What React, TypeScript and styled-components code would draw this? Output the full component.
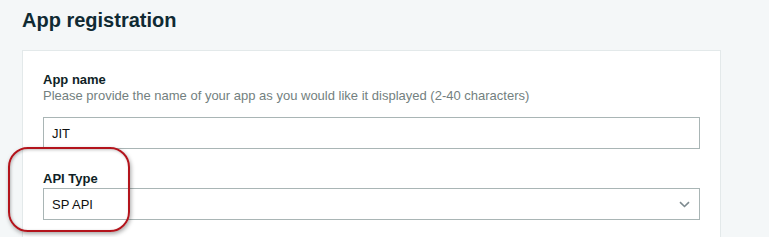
import React from "react";
import styled, { createGlobalStyle } from "styled-components";

const Global = createGlobalStyle`
  html, body { margin: 0; padding: 0; background: #f4f7f8; }
  body { font-family: Arial, "Liberation Sans", sans-serif; overflow: hidden; }
`;

const Page = styled.div`
  width: 769px;
  height: 237px;
  padding: 0 48px 0 22px;
  box-sizing: border-box;
  background: #f4f7f8;
  overflow: hidden;
`;

const Title = styled.h1`
  margin: 0;
  padding-top: 9px;
  height: 50px;
  box-sizing: border-box;
  font-size: 20px;
  line-height: 23px;
  font-weight: 700;
  color: #0f2a33;
`;

const Card = styled.div`
  background: #ffffff;
  border: 1px solid #e3e9ea;
  width: 699px;
  box-sizing: border-box;
  padding: 21px 20px 40px 20px;
  display: flex;
  flex-direction: column;
  gap: 22px;
`;

const Group = styled.div`
  position: relative;
  display: flex;
  flex-direction: column;
`;

const Label = styled.label`
  font-size: 13px;
  line-height: 16px;
  font-weight: 700;
  color: #0f1f26;
`;

const Hint = styled.div`
  font-size: 13px;
  line-height: 16px;
  color: #737f80;
  margin-bottom: 13px;
`;

const Field = styled.div<{ $gap?: number }>`
  height: 32px;
  box-sizing: border-box;
  border: 1px solid #a9b5b5;
  background: #fff;
  display: flex;
  align-items: center;
  justify-content: space-between;
  padding: 0 9px 0 8px;
  font-size: 13px;
  color: #0f1111;
  margin-top: ${(p) => p.$gap ?? 0}px;
`;

const Highlight = styled.div`
  position: absolute;
  left: -35px;
  top: -24px;
  width: 122px;
  height: 85px;
  box-sizing: border-box;
  border: 2px solid #b3141c;
  border-radius: 20px;
  box-shadow: 1px 2px 4px rgba(0, 0, 0, 0.35), inset 1px 1px 3px rgba(0,0,0,0.25);
  pointer-events: none;
`;

const Chevron = () => (
  <svg width="11" height="7" viewBox="0 0 11 7" fill="none">
    <path d="M1 1.2 L5.5 5.5 L10 1.2" stroke="#7d8a8f" strokeWidth="1.6" />
  </svg>
);

export default function App() {
  return (
    <Page>
      <Global />
      <Title>App registration</Title>
      <Card>
        <Group>
          <Label>App name</Label>
          <Hint>Please provide the name of your app as you would like it displayed (2-40 characters)</Hint>
          <Field>JIT</Field>
        </Group>
        <Group>
          <Label>API Type</Label>
          <Field $gap={1}>
            <span>SP API</span>
            <Chevron />
          </Field>
          <Highlight />
        </Group>
      </Card>
    </Page>
  );
}
